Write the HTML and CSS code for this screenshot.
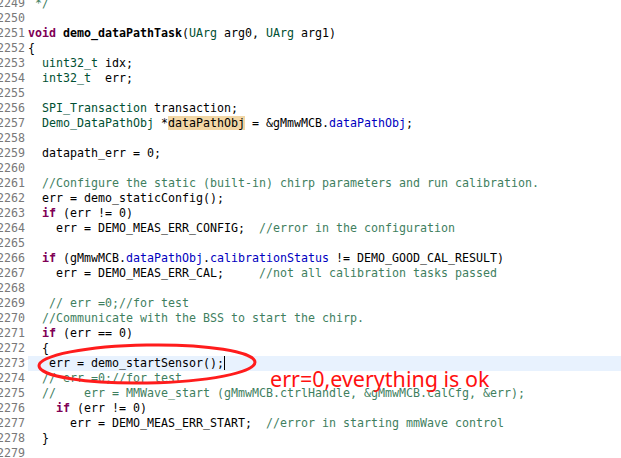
FILE: index.html
```html
<!DOCTYPE html>
<html lang="en">

<head>
    <meta charset="UTF-8">
    <meta name="viewport" content="width=device-width, initial-scale=1.0">
    <link rel="stylesheet" href="styles.css">
</head>

<body>

    <div class="editor">
        <div class="line"><span class="ln">2249</span><span class="code"> <span class="cm">*/</span></span></div>
        <div class="line"><span class="ln">2250</span><span class="code"></span></div>
        <div class="line"><span class="ln">2251</span><span class="code"><span class="kw">void</span> <span class="fn">demo_dataPathTask</span>(<span class="ty">UArg</span> arg0, <span class="ty">UArg</span> arg1)</span></div>
        <div class="line"><span class="ln">2252</span><span class="code">{</span></div>
        <div class="line"><span class="ln">2253</span><span class="code">  <span class="ty">uint32_t</span> idx;</span></div>
        <div class="line"><span class="ln">2254</span><span class="code">  <span class="ty">int32_t</span>  err;</span></div>
        <div class="line"><span class="ln">2255</span><span class="code"></span></div>
        <div class="line"><span class="ln">2256</span><span class="code">  <span class="ty">SPI_Transaction</span> transaction;</span></div>
        <div class="line"><span class="ln">2257</span><span class="code">  <span class="ty">Demo_DataPathObj</span> *<span class="occ">dataPathObj</span> = &amp;gMmwMCB.<span class="fd">dataPathObj</span>;</span></div>
        <div class="line"><span class="ln">2258</span><span class="code"></span></div>
        <div class="line"><span class="ln">2259</span><span class="code">  datapath_err = 0;</span></div>
        <div class="line"><span class="ln">2260</span><span class="code"></span></div>
        <div class="line"><span class="ln">2261</span><span class="code">  <span class="cm">//Configure the static (built-in) chirp parameters and run calibration.</span></span></div>
        <div class="line"><span class="ln">2262</span><span class="code">  err = demo_staticConfig();</span></div>
        <div class="line"><span class="ln">2263</span><span class="code">  <span class="kw">if</span> (err != 0)</span></div>
        <div class="line"><span class="ln">2264</span><span class="code">    err = DEMO_MEAS_ERR_CONFIG;  <span class="cm">//error in the configuration</span></span></div>
        <div class="line"><span class="ln">2265</span><span class="code"></span></div>
        <div class="line"><span class="ln">2266</span><span class="code">  <span class="kw">if</span> (gMmwMCB.<span class="fd">dataPathObj</span>.<span class="fd">calibrationStatus</span> != DEMO_GOOD_CAL_RESULT)</span></div>
        <div class="line"><span class="ln">2267</span><span class="code">    err = DEMO_MEAS_ERR_CAL;     <span class="cm">//not all calibration tasks passed</span></span></div>
        <div class="line"><span class="ln">2268</span><span class="code"></span></div>
        <div class="line"><span class="ln">2269</span><span class="code">   <span class="cm">// err =0;//for test</span></span></div>
        <div class="line"><span class="ln">2270</span><span class="code">  <span class="cm">//Communicate with the BSS to start the chirp.</span></span></div>
        <div class="line"><span class="ln">2271</span><span class="code">  <span class="kw">if</span> (err == 0)</span></div>
        <div class="line"><span class="ln">2272</span><span class="code">  {</span></div>
        <div class="line current"><span class="ln">2273</span><span class="code">   err = demo_startSensor();<span class="caret"></span></span></div>
        <div class="line"><span class="ln">2274</span><span class="code">  <span class="cm">// err =0;//for test</span></span></div>
        <div class="line"><span class="ln">2275</span><span class="code">  <span class="cm">//    err = MMWave_start (gMmwMCB.ctrlHandle, &amp;gMmwMCB.calCfg, &amp;err);</span></span></div>
        <div class="line"><span class="ln">2276</span><span class="code">    <span class="kw">if</span> (err != 0)</span></div>
        <div class="line"><span class="ln">2277</span><span class="code">      err = DEMO_MEAS_ERR_START;  <span class="cm">//error in starting mmWave control</span></span></div>
        <div class="line"><span class="ln">2278</span><span class="code">  }</span></div>
        <div class="line"><span class="ln">2279</span><span class="code"></span></div>
    </div>

    <!-- hand-drawn annotation on top of the screenshot -->
    <svg class="mark" width="621" height="458" viewBox="0 0 621 458">
        <ellipse cx="147" cy="364" rx="108" ry="19" fill="none" stroke="#ff1c1c" stroke-width="3" transform="rotate(-1 147 364)" />
    </svg>
    <div class="note">err=0,everything is ok</div>

</body>

</html>
```

FILE: styles.css
```css
body {
    margin: 0;
    padding: 0;
    background-color: #fff;
    overflow: hidden;
}

.editor {
    margin-top: -4px;
    font-family: "DejaVu Sans Mono", monospace;
    font-size: 11.63px;
    color: #000;
}

.line {
    display: flex;
    height: 15px;
    line-height: 15px;
}

.ln {
    width: 25px;
    flex: none;
    display: flex;
    justify-content: flex-end;
    overflow: hidden;
    color: #787878;
}

.code {
    flex: 1;
    margin-left: 3px;
    white-space: pre;
    position: relative;
}

.current .code {
    background-color: #e8f2fe;
}

.kw {
    color: #7f0055;
    font-weight: bold;
}

.fn {
    font-weight: bold;
}

.ty {
    color: #005032;
}

.cm {
    color: #3f7f5f;
}

.fd {
    color: #0000c0;
}

.occ {
    background-color: #f2d7a6;
}

.caret {
    display: inline-block;
    width: 1px;
    height: 14px;
    vertical-align: -3px;
    background-color: #000;
}

.mark {
    position: absolute;
    left: 0;
    top: 0;
}

.note {
    position: absolute;
    left: 270px;
    top: 367px;
    font-family: "Noto Sans", sans-serif;
    font-size: 21.5px;
    line-height: 24px;
    color: #ff1010;
}
```
